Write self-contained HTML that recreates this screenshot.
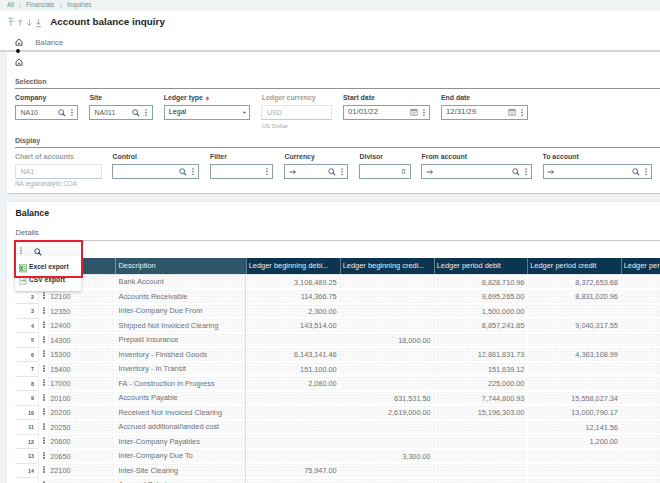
<!DOCTYPE html>
<html><head><meta charset="utf-8"><style>
html,body{margin:0;padding:0;width:660px;height:483px;overflow:hidden;background:#fff;position:relative;}
body{font-family:"Liberation Sans",sans-serif;}
.t{position:absolute;white-space:pre;}
.r{position:absolute;}
</style></head><body>
<div class="r" style="left:0.00px;top:0.00px;width:660.00px;height:10.80px;background:#eff3f4"></div>
<div class="t" style="left:7.00px;top:2.27px;font-size:6.3px;line-height:6.3px;color:#6a9690;font-weight:normal;">All</div>
<div class="t" style="left:26.00px;top:2.27px;font-size:6.3px;line-height:6.3px;color:#6a9690;font-weight:normal;">Financials</div>
<div class="t" style="left:67.00px;top:2.10px;font-size:6.5px;line-height:6.5px;color:#6a9690;font-weight:normal;">Inquiries</div>
<svg class="r" style="left:18.00px;top:1.80px;" width="4" height="7" viewBox="0 0 4 7"><path d="M1 0.9 L3.1 3.4 L1 5.9" fill="none" stroke="#b3bec1" stroke-width="0.75"/></svg>
<svg class="r" style="left:59.00px;top:1.80px;" width="4" height="7" viewBox="0 0 4 7"><path d="M1 0.9 L3.1 3.4 L1 5.9" fill="none" stroke="#b3bec1" stroke-width="0.75"/></svg>
<svg class="r" style="left:0.00px;top:12.00px;" width="50" height="20" viewBox="0 0 50 20"><g fill="none" stroke="#98aab2" stroke-width="0.95"><path d="M8.4 6.4 H13.2 M10.8 13.6 V8 M8.8 10 L10.8 8 L12.8 10"/><path d="M20.2 13.6 V7.8 M18.2 9.8 L20.2 7.8 L22.2 9.8"/><path d="M29.4 7.6 V13.4 M27.4 11.4 L29.4 13.4 L31.4 11.4"/><path d="M38.5 7.6 V12.6 M36.5 10.6 L38.5 12.6 L40.5 10.6 M36.1 14.6 H40.9"/></g></svg>
<div class="t" style="left:50.20px;top:17.02px;font-size:9.9px;line-height:9.9px;color:#1d1d1f;font-weight:bold;">Account balance inquiry</div>
<svg class="r" style="left:14.80px;top:38.40px;" width="8" height="8" viewBox="0 0 8 8"><path d="M1 7.2 V3.8 L4 1 L7 3.8 V7.2 Z" fill="none" stroke="#3a3a3a" stroke-width="0.9" stroke-linejoin="round"/><circle cx="4" cy="5.4" r="0.8" fill="#3a3a3a"/></svg>
<div class="t" style="left:35.20px;top:38.54px;font-size:7.75px;line-height:7.75px;color:#68747c;font-weight:normal;">Balance</div>
<div class="r" style="left:0.00px;top:52.00px;width:660.00px;height:431.00px;background:#eef2f4"></div>
<div class="r" style="left:0.00px;top:50.00px;width:660.00px;height:2.00px;background:#d3d7d9"></div>
<div class="r" style="left:6.70px;top:52.00px;width:693.30px;height:141.00px;background:#fff;box-shadow:0 0.8px 1px rgba(0,0,0,0.18)"></div>
<svg class="r" style="left:15.80px;top:48.80px;" width="4" height="4" viewBox="0 0 4 4"><circle cx="2" cy="2" r="1.9" fill="#000"/></svg>
<svg class="r" style="left:14.80px;top:58.20px;" width="8" height="8" viewBox="0 0 8 8"><path d="M1 7.2 V3.8 L4 1 L7 3.8 V7.2 Z" fill="none" stroke="#3a3a3a" stroke-width="0.9" stroke-linejoin="round"/><circle cx="4" cy="5.4" r="0.8" fill="#3a3a3a"/></svg>
<div class="t" style="left:15.00px;top:78.99px;font-size:7.1px;line-height:7.1px;color:#596469;font-weight:bold;">Selection</div>
<div class="r" style="left:15.00px;top:88.20px;width:645.00px;height:1.00px;background:#8c9297"></div>
<div class="t" style="left:15.00px;top:95.06px;font-size:6.9px;line-height:6.9px;color:#3b464d;font-weight:bold;">Company</div>
<div class="t" style="left:89.50px;top:95.06px;font-size:6.9px;line-height:6.9px;color:#3b464d;font-weight:bold;">Site</div>
<div class="t" style="left:163.80px;top:95.06px;font-size:6.9px;line-height:6.9px;color:#3b464d;font-weight:bold;">Ledger type</div>
<svg class="r" style="left:204.60px;top:95.50px;" width="5" height="5" viewBox="0 0 5 5"><path d="M2.5 0.6 V4.4 M0.85 1.55 L4.15 3.45 M0.85 3.45 L4.15 1.55" stroke="#e0456a" stroke-width="0.9"/></svg>
<div class="t" style="left:261.70px;top:95.06px;font-size:6.9px;line-height:6.9px;color:#959fa5;font-weight:bold;">Ledger currency</div>
<div class="t" style="left:343.00px;top:95.06px;font-size:6.9px;line-height:6.9px;color:#3b464d;font-weight:bold;">Start date</div>
<div class="t" style="left:441.00px;top:95.06px;font-size:6.9px;line-height:6.9px;color:#3b464d;font-weight:bold;">End date</div>
<div class="r" style="left:15.00px;top:105.00px;width:63.00px;height:15.00px;background:#fff;border:1px solid #8aa0ab;box-sizing:border-box;border-radius:0.6px"></div>
<div class="t" style="left:20.50px;top:108.97px;font-size:7px;line-height:7px;color:#4d5860;font-weight:normal;">NA10</div>
<svg class="r" style="left:58.30px;top:108.60px;" width="8" height="8" viewBox="0 0 8 8"><circle cx="3.2" cy="3.2" r="2.45" fill="none" stroke="#50677a" stroke-width="0.95"/><path d="M5 5 L6.8 6.8" stroke="#50677a" stroke-width="1.2" stroke-linecap="round"/></svg>
<svg class="r" style="left:71.40px;top:109.00px;" width="2" height="8" viewBox="0 0 2 8"><circle cx="1" cy="1" r="0.8" fill="#55697a"/><circle cx="1" cy="3.6" r="0.8" fill="#55697a"/><circle cx="1" cy="6.2" r="0.8" fill="#55697a"/></svg>
<div class="r" style="left:89.00px;top:105.00px;width:63.50px;height:15.00px;background:#fff;border:1px solid #8aa0ab;box-sizing:border-box;border-radius:0.6px"></div>
<div class="t" style="left:94.50px;top:108.97px;font-size:7px;line-height:7px;color:#4d5860;font-weight:normal;">NA011</div>
<svg class="r" style="left:132.30px;top:108.60px;" width="8" height="8" viewBox="0 0 8 8"><circle cx="3.2" cy="3.2" r="2.45" fill="none" stroke="#50677a" stroke-width="0.95"/><path d="M5 5 L6.8 6.8" stroke="#50677a" stroke-width="1.2" stroke-linecap="round"/></svg>
<svg class="r" style="left:145.40px;top:109.00px;" width="2" height="8" viewBox="0 0 2 8"><circle cx="1" cy="1" r="0.8" fill="#55697a"/><circle cx="1" cy="3.6" r="0.8" fill="#55697a"/><circle cx="1" cy="6.2" r="0.8" fill="#55697a"/></svg>
<div class="r" style="left:163.50px;top:105.00px;width:86.50px;height:15.00px;background:#fff;border:1px solid #8aa0ab;box-sizing:border-box;border-radius:0.6px"></div>
<div class="t" style="left:168.80px;top:109.19px;font-size:7.1px;line-height:7.1px;color:#1f2629;font-weight:normal;">Legal</div>
<svg class="r" style="left:241.50px;top:110.50px;" width="5" height="4" viewBox="0 0 5 4"><path d="M0.6 0.8 H4.4 L2.5 3 Z" fill="#6d7b82"/></svg>
<div class="r" style="left:261.20px;top:105.00px;width:70.80px;height:15.00px;background:#fff;border:1px solid #dfe6e9;border-bottom:1.3px solid #bfcbd1;box-sizing:border-box;border-radius:0.6px"></div>
<div class="t" style="left:267.00px;top:108.97px;font-size:7px;line-height:7px;color:#a3adb2;font-weight:normal;">USD</div>
<div class="t" style="left:261.70px;top:122.99px;font-size:6.15px;line-height:6.15px;color:#a3adb2;font-weight:normal;">US Dollar</div>
<div class="r" style="left:343.00px;top:105.00px;width:87.00px;height:15.00px;background:#fff;border:1px solid #8aa0ab;box-sizing:border-box;border-radius:0.6px"></div>
<div class="t" style="left:348.00px;top:108.38px;font-size:7.7px;line-height:7.7px;color:#4d5860;font-weight:normal;">01/01/22</div>
<svg class="r" style="left:410.00px;top:108.30px;" width="8" height="8" viewBox="0 0 8 8"><rect x="0.8" y="1.6" width="6.4" height="5.6" fill="none" stroke="#8e9ea6" stroke-width="0.9"/><rect x="0.8" y="1.6" width="6.4" height="1.6" fill="#8e9ea6"/><path d="M2.5 0.6 V2.2 M5.5 0.6 V2.2" stroke="#8e9ea6" stroke-width="0.8"/><path d="M2 4.6 H6 M2 6 H6 M4 3.4 V7" stroke="#8e9ea6" stroke-width="0.4"/></svg>
<svg class="r" style="left:423.20px;top:109.00px;" width="2" height="8" viewBox="0 0 2 8"><circle cx="1" cy="1" r="0.8" fill="#55697a"/><circle cx="1" cy="3.6" r="0.8" fill="#55697a"/><circle cx="1" cy="6.2" r="0.8" fill="#55697a"/></svg>
<div class="r" style="left:441.00px;top:105.00px;width:87.00px;height:15.00px;background:#fff;border:1px solid #8aa0ab;box-sizing:border-box;border-radius:0.6px"></div>
<div class="t" style="left:446.00px;top:108.38px;font-size:7.7px;line-height:7.7px;color:#4d5860;font-weight:normal;">12/31/29</div>
<svg class="r" style="left:508.00px;top:108.30px;" width="8" height="8" viewBox="0 0 8 8"><rect x="0.8" y="1.6" width="6.4" height="5.6" fill="none" stroke="#8e9ea6" stroke-width="0.9"/><rect x="0.8" y="1.6" width="6.4" height="1.6" fill="#8e9ea6"/><path d="M2.5 0.6 V2.2 M5.5 0.6 V2.2" stroke="#8e9ea6" stroke-width="0.8"/><path d="M2 4.6 H6 M2 6 H6 M4 3.4 V7" stroke="#8e9ea6" stroke-width="0.4"/></svg>
<svg class="r" style="left:521.20px;top:109.00px;" width="2" height="8" viewBox="0 0 2 8"><circle cx="1" cy="1" r="0.8" fill="#55697a"/><circle cx="1" cy="3.6" r="0.8" fill="#55697a"/><circle cx="1" cy="6.2" r="0.8" fill="#55697a"/></svg>
<div class="t" style="left:15.00px;top:138.09px;font-size:7.1px;line-height:7.1px;color:#596469;font-weight:bold;">Display</div>
<div class="r" style="left:15.00px;top:147.20px;width:645.00px;height:1.00px;background:#8c9297"></div>
<div class="t" style="left:15.00px;top:153.93px;font-size:6.94px;line-height:6.94px;color:#959fa5;font-weight:bold;">Chart of accounts</div>
<div class="t" style="left:112.50px;top:153.96px;font-size:6.9px;line-height:6.9px;color:#3b464d;font-weight:bold;">Control</div>
<div class="t" style="left:210.00px;top:153.96px;font-size:6.9px;line-height:6.9px;color:#3b464d;font-weight:bold;">Filter</div>
<div class="t" style="left:284.50px;top:153.96px;font-size:6.9px;line-height:6.9px;color:#3b464d;font-weight:bold;">Currency</div>
<div class="t" style="left:359.50px;top:153.96px;font-size:6.9px;line-height:6.9px;color:#3b464d;font-weight:bold;">Divisor</div>
<div class="t" style="left:421.50px;top:153.96px;font-size:6.9px;line-height:6.9px;color:#3b464d;font-weight:bold;">From account</div>
<div class="t" style="left:542.50px;top:153.96px;font-size:6.9px;line-height:6.9px;color:#3b464d;font-weight:bold;">To account</div>
<div class="r" style="left:15.00px;top:164.00px;width:86.50px;height:15.00px;background:#fff;border:1px solid #dfe6e9;border-bottom:1.3px solid #bfcbd1;box-sizing:border-box;border-radius:0.6px"></div>
<div class="t" style="left:20.50px;top:168.07px;font-size:7px;line-height:7px;color:#a3adb2;font-weight:normal;">NA1</div>
<div class="t" style="left:15.00px;top:181.37px;font-size:6.3px;line-height:6.3px;color:#a3adb2;font-weight:normal;">NA legal/analytic COA</div>
<div class="r" style="left:112.00px;top:164.00px;width:87.00px;height:15.00px;background:#fff;border:1px solid #8aa0ab;box-sizing:border-box;border-radius:0.6px"></div>
<svg class="r" style="left:179.30px;top:167.60px;" width="8" height="8" viewBox="0 0 8 8"><circle cx="3.2" cy="3.2" r="2.45" fill="none" stroke="#50677a" stroke-width="0.95"/><path d="M5 5 L6.8 6.8" stroke="#50677a" stroke-width="1.2" stroke-linecap="round"/></svg>
<svg class="r" style="left:192.40px;top:168.00px;" width="2" height="8" viewBox="0 0 2 8"><circle cx="1" cy="1" r="0.8" fill="#55697a"/><circle cx="1" cy="3.6" r="0.8" fill="#55697a"/><circle cx="1" cy="6.2" r="0.8" fill="#55697a"/></svg>
<div class="r" style="left:210.00px;top:164.00px;width:63.00px;height:15.00px;background:#fff;border:1px solid #8aa0ab;box-sizing:border-box;border-radius:0.6px"></div>
<svg class="r" style="left:266.40px;top:168.00px;" width="2" height="8" viewBox="0 0 2 8"><circle cx="1" cy="1" r="0.8" fill="#55697a"/><circle cx="1" cy="3.6" r="0.8" fill="#55697a"/><circle cx="1" cy="6.2" r="0.8" fill="#55697a"/></svg>
<div class="r" style="left:284.00px;top:164.00px;width:64.00px;height:15.00px;background:#fff;border:1px solid #8aa0ab;box-sizing:border-box;border-radius:0.6px"></div>
<svg class="r" style="left:288.50px;top:168.60px;" width="8" height="6" viewBox="0 0 8 6"><path d="M0.7 3 H6.4 M4.5 1.2 L6.4 3 L4.5 4.8" fill="none" stroke="#4a6172" stroke-width="1"/></svg>
<svg class="r" style="left:328.30px;top:167.60px;" width="8" height="8" viewBox="0 0 8 8"><circle cx="3.2" cy="3.2" r="2.45" fill="none" stroke="#50677a" stroke-width="0.95"/><path d="M5 5 L6.8 6.8" stroke="#50677a" stroke-width="1.2" stroke-linecap="round"/></svg>
<svg class="r" style="left:341.40px;top:168.00px;" width="2" height="8" viewBox="0 0 2 8"><circle cx="1" cy="1" r="0.8" fill="#55697a"/><circle cx="1" cy="3.6" r="0.8" fill="#55697a"/><circle cx="1" cy="6.2" r="0.8" fill="#55697a"/></svg>
<div class="r" style="left:359.00px;top:164.00px;width:51.50px;height:15.00px;background:#fff;border:1px solid #8aa0ab;box-sizing:border-box;border-radius:0.6px"></div>
<div class="t" style="right:254.50px;top:168.07px;font-size:7px;line-height:7px;color:#4d5860;font-weight:normal;text-align:right;">0</div>
<div class="r" style="left:421.00px;top:164.00px;width:111.00px;height:15.00px;background:#fff;border:1px solid #8aa0ab;box-sizing:border-box;border-radius:0.6px"></div>
<svg class="r" style="left:425.50px;top:168.60px;" width="8" height="6" viewBox="0 0 8 6"><path d="M0.7 3 H6.4 M4.5 1.2 L6.4 3 L4.5 4.8" fill="none" stroke="#4a6172" stroke-width="1"/></svg>
<svg class="r" style="left:512.30px;top:167.60px;" width="8" height="8" viewBox="0 0 8 8"><circle cx="3.2" cy="3.2" r="2.45" fill="none" stroke="#50677a" stroke-width="0.95"/><path d="M5 5 L6.8 6.8" stroke="#50677a" stroke-width="1.2" stroke-linecap="round"/></svg>
<svg class="r" style="left:525.40px;top:168.00px;" width="2" height="8" viewBox="0 0 2 8"><circle cx="1" cy="1" r="0.8" fill="#55697a"/><circle cx="1" cy="3.6" r="0.8" fill="#55697a"/><circle cx="1" cy="6.2" r="0.8" fill="#55697a"/></svg>
<div class="r" style="left:542.50px;top:164.00px;width:109.50px;height:15.00px;background:#fff;border:1px solid #8aa0ab;box-sizing:border-box;border-radius:0.6px"></div>
<svg class="r" style="left:547.00px;top:168.60px;" width="8" height="6" viewBox="0 0 8 6"><path d="M0.7 3 H6.4 M4.5 1.2 L6.4 3 L4.5 4.8" fill="none" stroke="#4a6172" stroke-width="1"/></svg>
<svg class="r" style="left:632.30px;top:167.60px;" width="8" height="8" viewBox="0 0 8 8"><circle cx="3.2" cy="3.2" r="2.45" fill="none" stroke="#50677a" stroke-width="0.95"/><path d="M5 5 L6.8 6.8" stroke="#50677a" stroke-width="1.2" stroke-linecap="round"/></svg>
<svg class="r" style="left:645.40px;top:168.00px;" width="2" height="8" viewBox="0 0 2 8"><circle cx="1" cy="1" r="0.8" fill="#55697a"/><circle cx="1" cy="3.6" r="0.8" fill="#55697a"/><circle cx="1" cy="6.2" r="0.8" fill="#55697a"/></svg>
<div class="r" style="left:6.70px;top:201.70px;width:693.30px;height:281.30px;background:#fff;box-shadow:0 0 1px rgba(0,0,0,0.15)"></div>
<div class="t" style="left:15.50px;top:208.68px;font-size:8.76px;line-height:8.76px;color:#1b1b1b;font-weight:bold;">Balance</div>
<div class="t" style="left:15.50px;top:229.02px;font-size:7.66px;line-height:7.66px;color:#58636a;font-weight:normal;">Details</div>
<div class="r" style="left:15.00px;top:240.00px;width:645.00px;height:1.00px;background:#c4c8cb"></div>
<div class="r" style="left:47.50px;top:257.60px;width:198.50px;height:16.00px;background:#2d566b"></div>
<div class="r" style="left:246.00px;top:257.60px;width:454.00px;height:16.00px;background:#0b3550"></div>
<div class="r" style="left:15.00px;top:257.60px;width:32.50px;height:16.00px;background:#2d566b"></div>
<div class="r" style="left:115.10px;top:257.60px;width:1.00px;height:16.00px;background:#7593a0"></div>
<div class="r" style="left:245.50px;top:257.60px;width:1.00px;height:16.00px;background:#5d7d8e"></div>
<div class="r" style="left:339.50px;top:257.60px;width:1.00px;height:16.00px;background:#5d7d8e"></div>
<div class="r" style="left:433.50px;top:257.60px;width:1.00px;height:16.00px;background:#5d7d8e"></div>
<div class="r" style="left:527.00px;top:257.60px;width:1.00px;height:16.00px;background:#5d7d8e"></div>
<div class="r" style="left:620.50px;top:257.60px;width:1.00px;height:16.00px;background:#5d7d8e"></div>
<div class="t" style="left:118.50px;top:262.09px;font-size:7.45px;line-height:7.45px;color:#e9eef1;font-weight:normal;">Description</div>
<div class="t" style="left:248.70px;top:262.09px;font-size:7.45px;line-height:7.45px;color:#e9eef1;font-weight:normal;">Ledger beginning debi...</div>
<div class="t" style="left:342.70px;top:262.09px;font-size:7.45px;line-height:7.45px;color:#e9eef1;font-weight:normal;">Ledger beginning credi...</div>
<div class="t" style="left:436.70px;top:262.09px;font-size:7.45px;line-height:7.45px;color:#e9eef1;font-weight:normal;">Ledger period debit</div>
<div class="t" style="left:530.20px;top:262.09px;font-size:7.45px;line-height:7.45px;color:#e9eef1;font-weight:normal;">Ledger period credit</div>
<div class="t" style="left:623.70px;top:262.09px;font-size:7.45px;line-height:7.45px;color:#e9eef1;font-weight:normal;">Ledger period...</div>
<div class="r" style="left:15.00px;top:273.50px;width:685.00px;height:1.40px;background:#dfe3e4"></div>
<div class="r" style="left:15.00px;top:288.50px;width:23.20px;height:1.00px;background:#e3e7e9"></div>
<div class="r" style="left:47.80px;top:275.80px;width:67.30px;height:12.20px;background-color:#fefefe;background-image:linear-gradient(90deg,#f4f4f4 0.75px,transparent 0.75px),linear-gradient(#f5f5f5 0.75px,transparent 0.75px);background-size:2.91px 2.91px;"></div>
<div class="r" style="left:116.10px;top:275.80px;width:129.50px;height:12.20px;background-color:#fefefe;background-image:linear-gradient(90deg,#f4f4f4 0.75px,transparent 0.75px),linear-gradient(#f5f5f5 0.75px,transparent 0.75px);background-size:2.91px 2.91px;"></div>
<div class="r" style="left:246.50px;top:275.80px;width:93.10px;height:12.20px;background-color:#fefefe;background-image:linear-gradient(90deg,#f4f4f4 0.75px,transparent 0.75px),linear-gradient(#f5f5f5 0.75px,transparent 0.75px);background-size:2.91px 2.91px;"></div>
<div class="r" style="left:340.40px;top:275.80px;width:93.20px;height:12.20px;background-color:#fefefe;background-image:linear-gradient(90deg,#f4f4f4 0.75px,transparent 0.75px),linear-gradient(#f5f5f5 0.75px,transparent 0.75px);background-size:2.91px 2.91px;"></div>
<div class="r" style="left:434.40px;top:275.80px;width:92.70px;height:12.20px;background-color:#fefefe;background-image:linear-gradient(90deg,#f4f4f4 0.75px,transparent 0.75px),linear-gradient(#f5f5f5 0.75px,transparent 0.75px);background-size:2.91px 2.91px;"></div>
<div class="r" style="left:527.90px;top:275.80px;width:92.70px;height:12.20px;background-color:#fefefe;background-image:linear-gradient(90deg,#f4f4f4 0.75px,transparent 0.75px),linear-gradient(#f5f5f5 0.75px,transparent 0.75px);background-size:2.91px 2.91px;"></div>
<div class="r" style="left:621.40px;top:275.80px;width:78.60px;height:12.20px;background-color:#fefefe;background-image:linear-gradient(90deg,#f4f4f4 0.75px,transparent 0.75px),linear-gradient(#f5f5f5 0.75px,transparent 0.75px);background-size:2.91px 2.91px;"></div>
<div class="t" style="right:626.20px;top:280.30px;font-size:5.2px;line-height:5.2px;color:#4a5660;font-weight:bold;text-align:right;">1</div>
<svg class="r" style="left:43.20px;top:277.90px;" width="2" height="8" viewBox="0 0 2 8"><circle cx="1" cy="1" r="0.85" fill="#36414a"/><circle cx="1" cy="3.45" r="0.85" fill="#36414a"/><circle cx="1" cy="5.9" r="0.85" fill="#36414a"/></svg>
<div class="t" style="left:50.30px;top:278.56px;font-size:7.25px;line-height:7.25px;color:#69737a;font-weight:normal;">10100</div>
<div class="t" style="left:118.50px;top:278.44px;font-size:7.4px;line-height:7.4px;color:#69737a;font-weight:normal;">Bank Account</div>
<div class="t" style="right:323.40px;top:278.52px;font-size:7.3px;line-height:7.3px;color:#69737a;font-weight:normal;text-align:right;">3,106,489.25</div>
<div class="t" style="right:135.60px;top:278.52px;font-size:7.3px;line-height:7.3px;color:#69737a;font-weight:normal;text-align:right;">8,828,710.96</div>
<div class="t" style="right:42.10px;top:278.52px;font-size:7.3px;line-height:7.3px;color:#69737a;font-weight:normal;text-align:right;">8,372,653.68</div>
<div class="r" style="left:15.00px;top:303.00px;width:23.20px;height:1.00px;background:#e3e7e9"></div>
<div class="r" style="left:47.80px;top:290.00px;width:67.30px;height:12.50px;background-color:#fefefe;background-image:linear-gradient(90deg,#f4f4f4 0.75px,transparent 0.75px),linear-gradient(#f5f5f5 0.75px,transparent 0.75px);background-size:2.91px 2.91px;"></div>
<div class="r" style="left:116.10px;top:290.00px;width:129.50px;height:12.50px;background-color:#fefefe;background-image:linear-gradient(90deg,#f4f4f4 0.75px,transparent 0.75px),linear-gradient(#f5f5f5 0.75px,transparent 0.75px);background-size:2.91px 2.91px;"></div>
<div class="r" style="left:246.50px;top:290.00px;width:93.10px;height:12.50px;background-color:#fefefe;background-image:linear-gradient(90deg,#f4f4f4 0.75px,transparent 0.75px),linear-gradient(#f5f5f5 0.75px,transparent 0.75px);background-size:2.91px 2.91px;"></div>
<div class="r" style="left:340.40px;top:290.00px;width:93.20px;height:12.50px;background-color:#fefefe;background-image:linear-gradient(90deg,#f4f4f4 0.75px,transparent 0.75px),linear-gradient(#f5f5f5 0.75px,transparent 0.75px);background-size:2.91px 2.91px;"></div>
<div class="r" style="left:434.40px;top:290.00px;width:92.70px;height:12.50px;background-color:#fefefe;background-image:linear-gradient(90deg,#f4f4f4 0.75px,transparent 0.75px),linear-gradient(#f5f5f5 0.75px,transparent 0.75px);background-size:2.91px 2.91px;"></div>
<div class="r" style="left:527.90px;top:290.00px;width:92.70px;height:12.50px;background-color:#fefefe;background-image:linear-gradient(90deg,#f4f4f4 0.75px,transparent 0.75px),linear-gradient(#f5f5f5 0.75px,transparent 0.75px);background-size:2.91px 2.91px;"></div>
<div class="r" style="left:621.40px;top:290.00px;width:78.60px;height:12.50px;background-color:#fefefe;background-image:linear-gradient(90deg,#f4f4f4 0.75px,transparent 0.75px),linear-gradient(#f5f5f5 0.75px,transparent 0.75px);background-size:2.91px 2.91px;"></div>
<div class="t" style="right:626.20px;top:294.80px;font-size:5.2px;line-height:5.2px;color:#4a5660;font-weight:bold;text-align:right;">2</div>
<svg class="r" style="left:43.20px;top:292.40px;" width="2" height="8" viewBox="0 0 2 8"><circle cx="1" cy="1" r="0.85" fill="#36414a"/><circle cx="1" cy="3.45" r="0.85" fill="#36414a"/><circle cx="1" cy="5.9" r="0.85" fill="#36414a"/></svg>
<div class="t" style="left:50.30px;top:293.06px;font-size:7.25px;line-height:7.25px;color:#69737a;font-weight:normal;">12100</div>
<div class="t" style="left:118.50px;top:292.94px;font-size:7.4px;line-height:7.4px;color:#69737a;font-weight:normal;">Accounts Receivable</div>
<div class="t" style="right:323.40px;top:293.02px;font-size:7.3px;line-height:7.3px;color:#69737a;font-weight:normal;text-align:right;">114,366.75</div>
<div class="t" style="right:135.60px;top:293.02px;font-size:7.3px;line-height:7.3px;color:#69737a;font-weight:normal;text-align:right;">9,695,265.00</div>
<div class="t" style="right:42.10px;top:293.02px;font-size:7.3px;line-height:7.3px;color:#69737a;font-weight:normal;text-align:right;">8,831,020.96</div>
<div class="r" style="left:15.00px;top:317.50px;width:23.20px;height:1.00px;background:#e3e7e9"></div>
<div class="r" style="left:47.80px;top:304.50px;width:67.30px;height:12.50px;background-color:#fefefe;background-image:linear-gradient(90deg,#f4f4f4 0.75px,transparent 0.75px),linear-gradient(#f5f5f5 0.75px,transparent 0.75px);background-size:2.91px 2.91px;"></div>
<div class="r" style="left:116.10px;top:304.50px;width:129.50px;height:12.50px;background-color:#fefefe;background-image:linear-gradient(90deg,#f4f4f4 0.75px,transparent 0.75px),linear-gradient(#f5f5f5 0.75px,transparent 0.75px);background-size:2.91px 2.91px;"></div>
<div class="r" style="left:246.50px;top:304.50px;width:93.10px;height:12.50px;background-color:#fefefe;background-image:linear-gradient(90deg,#f4f4f4 0.75px,transparent 0.75px),linear-gradient(#f5f5f5 0.75px,transparent 0.75px);background-size:2.91px 2.91px;"></div>
<div class="r" style="left:340.40px;top:304.50px;width:93.20px;height:12.50px;background-color:#fefefe;background-image:linear-gradient(90deg,#f4f4f4 0.75px,transparent 0.75px),linear-gradient(#f5f5f5 0.75px,transparent 0.75px);background-size:2.91px 2.91px;"></div>
<div class="r" style="left:434.40px;top:304.50px;width:92.70px;height:12.50px;background-color:#fefefe;background-image:linear-gradient(90deg,#f4f4f4 0.75px,transparent 0.75px),linear-gradient(#f5f5f5 0.75px,transparent 0.75px);background-size:2.91px 2.91px;"></div>
<div class="r" style="left:527.90px;top:304.50px;width:92.70px;height:12.50px;background-color:#fefefe;background-image:linear-gradient(90deg,#f4f4f4 0.75px,transparent 0.75px),linear-gradient(#f5f5f5 0.75px,transparent 0.75px);background-size:2.91px 2.91px;"></div>
<div class="r" style="left:621.40px;top:304.50px;width:78.60px;height:12.50px;background-color:#fefefe;background-image:linear-gradient(90deg,#f4f4f4 0.75px,transparent 0.75px),linear-gradient(#f5f5f5 0.75px,transparent 0.75px);background-size:2.91px 2.91px;"></div>
<div class="t" style="right:626.20px;top:309.30px;font-size:5.2px;line-height:5.2px;color:#4a5660;font-weight:bold;text-align:right;">3</div>
<svg class="r" style="left:43.20px;top:306.90px;" width="2" height="8" viewBox="0 0 2 8"><circle cx="1" cy="1" r="0.85" fill="#36414a"/><circle cx="1" cy="3.45" r="0.85" fill="#36414a"/><circle cx="1" cy="5.9" r="0.85" fill="#36414a"/></svg>
<div class="t" style="left:50.30px;top:307.56px;font-size:7.25px;line-height:7.25px;color:#69737a;font-weight:normal;">12350</div>
<div class="t" style="left:118.50px;top:307.44px;font-size:7.4px;line-height:7.4px;color:#69737a;font-weight:normal;">Inter-Company Due From</div>
<div class="t" style="right:323.40px;top:307.52px;font-size:7.3px;line-height:7.3px;color:#69737a;font-weight:normal;text-align:right;">2,300.00</div>
<div class="t" style="right:135.60px;top:307.52px;font-size:7.3px;line-height:7.3px;color:#69737a;font-weight:normal;text-align:right;">1,500,000.00</div>
<div class="r" style="left:15.00px;top:332.00px;width:23.20px;height:1.00px;background:#e3e7e9"></div>
<div class="r" style="left:47.80px;top:319.00px;width:67.30px;height:12.50px;background-color:#fefefe;background-image:linear-gradient(90deg,#f4f4f4 0.75px,transparent 0.75px),linear-gradient(#f5f5f5 0.75px,transparent 0.75px);background-size:2.91px 2.91px;"></div>
<div class="r" style="left:116.10px;top:319.00px;width:129.50px;height:12.50px;background-color:#fefefe;background-image:linear-gradient(90deg,#f4f4f4 0.75px,transparent 0.75px),linear-gradient(#f5f5f5 0.75px,transparent 0.75px);background-size:2.91px 2.91px;"></div>
<div class="r" style="left:246.50px;top:319.00px;width:93.10px;height:12.50px;background-color:#fefefe;background-image:linear-gradient(90deg,#f4f4f4 0.75px,transparent 0.75px),linear-gradient(#f5f5f5 0.75px,transparent 0.75px);background-size:2.91px 2.91px;"></div>
<div class="r" style="left:340.40px;top:319.00px;width:93.20px;height:12.50px;background-color:#fefefe;background-image:linear-gradient(90deg,#f4f4f4 0.75px,transparent 0.75px),linear-gradient(#f5f5f5 0.75px,transparent 0.75px);background-size:2.91px 2.91px;"></div>
<div class="r" style="left:434.40px;top:319.00px;width:92.70px;height:12.50px;background-color:#fefefe;background-image:linear-gradient(90deg,#f4f4f4 0.75px,transparent 0.75px),linear-gradient(#f5f5f5 0.75px,transparent 0.75px);background-size:2.91px 2.91px;"></div>
<div class="r" style="left:527.90px;top:319.00px;width:92.70px;height:12.50px;background-color:#fefefe;background-image:linear-gradient(90deg,#f4f4f4 0.75px,transparent 0.75px),linear-gradient(#f5f5f5 0.75px,transparent 0.75px);background-size:2.91px 2.91px;"></div>
<div class="r" style="left:621.40px;top:319.00px;width:78.60px;height:12.50px;background-color:#fefefe;background-image:linear-gradient(90deg,#f4f4f4 0.75px,transparent 0.75px),linear-gradient(#f5f5f5 0.75px,transparent 0.75px);background-size:2.91px 2.91px;"></div>
<div class="t" style="right:626.20px;top:323.80px;font-size:5.2px;line-height:5.2px;color:#4a5660;font-weight:bold;text-align:right;">4</div>
<svg class="r" style="left:43.20px;top:321.40px;" width="2" height="8" viewBox="0 0 2 8"><circle cx="1" cy="1" r="0.85" fill="#36414a"/><circle cx="1" cy="3.45" r="0.85" fill="#36414a"/><circle cx="1" cy="5.9" r="0.85" fill="#36414a"/></svg>
<div class="t" style="left:50.30px;top:322.06px;font-size:7.25px;line-height:7.25px;color:#69737a;font-weight:normal;">12400</div>
<div class="t" style="left:118.50px;top:321.94px;font-size:7.4px;line-height:7.4px;color:#69737a;font-weight:normal;">Shipped Not Invoiced Clearing</div>
<div class="t" style="right:323.40px;top:322.02px;font-size:7.3px;line-height:7.3px;color:#69737a;font-weight:normal;text-align:right;">143,514.00</div>
<div class="t" style="right:135.60px;top:322.02px;font-size:7.3px;line-height:7.3px;color:#69737a;font-weight:normal;text-align:right;">8,857,241.65</div>
<div class="t" style="right:42.10px;top:322.02px;font-size:7.3px;line-height:7.3px;color:#69737a;font-weight:normal;text-align:right;">9,040,317.55</div>
<div class="r" style="left:15.00px;top:346.50px;width:23.20px;height:1.00px;background:#e3e7e9"></div>
<div class="r" style="left:47.80px;top:333.50px;width:67.30px;height:12.50px;background-color:#fefefe;background-image:linear-gradient(90deg,#f4f4f4 0.75px,transparent 0.75px),linear-gradient(#f5f5f5 0.75px,transparent 0.75px);background-size:2.91px 2.91px;"></div>
<div class="r" style="left:116.10px;top:333.50px;width:129.50px;height:12.50px;background-color:#fefefe;background-image:linear-gradient(90deg,#f4f4f4 0.75px,transparent 0.75px),linear-gradient(#f5f5f5 0.75px,transparent 0.75px);background-size:2.91px 2.91px;"></div>
<div class="r" style="left:246.50px;top:333.50px;width:93.10px;height:12.50px;background-color:#fefefe;background-image:linear-gradient(90deg,#f4f4f4 0.75px,transparent 0.75px),linear-gradient(#f5f5f5 0.75px,transparent 0.75px);background-size:2.91px 2.91px;"></div>
<div class="r" style="left:340.40px;top:333.50px;width:93.20px;height:12.50px;background-color:#fefefe;background-image:linear-gradient(90deg,#f4f4f4 0.75px,transparent 0.75px),linear-gradient(#f5f5f5 0.75px,transparent 0.75px);background-size:2.91px 2.91px;"></div>
<div class="r" style="left:434.40px;top:333.50px;width:92.70px;height:12.50px;background-color:#fefefe;background-image:linear-gradient(90deg,#f4f4f4 0.75px,transparent 0.75px),linear-gradient(#f5f5f5 0.75px,transparent 0.75px);background-size:2.91px 2.91px;"></div>
<div class="r" style="left:527.90px;top:333.50px;width:92.70px;height:12.50px;background-color:#fefefe;background-image:linear-gradient(90deg,#f4f4f4 0.75px,transparent 0.75px),linear-gradient(#f5f5f5 0.75px,transparent 0.75px);background-size:2.91px 2.91px;"></div>
<div class="r" style="left:621.40px;top:333.50px;width:78.60px;height:12.50px;background-color:#fefefe;background-image:linear-gradient(90deg,#f4f4f4 0.75px,transparent 0.75px),linear-gradient(#f5f5f5 0.75px,transparent 0.75px);background-size:2.91px 2.91px;"></div>
<div class="t" style="right:626.20px;top:338.30px;font-size:5.2px;line-height:5.2px;color:#4a5660;font-weight:bold;text-align:right;">5</div>
<svg class="r" style="left:43.20px;top:335.90px;" width="2" height="8" viewBox="0 0 2 8"><circle cx="1" cy="1" r="0.85" fill="#36414a"/><circle cx="1" cy="3.45" r="0.85" fill="#36414a"/><circle cx="1" cy="5.9" r="0.85" fill="#36414a"/></svg>
<div class="t" style="left:50.30px;top:336.56px;font-size:7.25px;line-height:7.25px;color:#69737a;font-weight:normal;">14300</div>
<div class="t" style="left:118.50px;top:336.44px;font-size:7.4px;line-height:7.4px;color:#69737a;font-weight:normal;">Prepaid Insurance</div>
<div class="t" style="right:229.40px;top:336.52px;font-size:7.3px;line-height:7.3px;color:#69737a;font-weight:normal;text-align:right;">18,000.00</div>
<div class="r" style="left:15.00px;top:361.00px;width:23.20px;height:1.00px;background:#e3e7e9"></div>
<div class="r" style="left:47.80px;top:348.00px;width:67.30px;height:12.50px;background-color:#fefefe;background-image:linear-gradient(90deg,#f4f4f4 0.75px,transparent 0.75px),linear-gradient(#f5f5f5 0.75px,transparent 0.75px);background-size:2.91px 2.91px;"></div>
<div class="r" style="left:116.10px;top:348.00px;width:129.50px;height:12.50px;background-color:#fefefe;background-image:linear-gradient(90deg,#f4f4f4 0.75px,transparent 0.75px),linear-gradient(#f5f5f5 0.75px,transparent 0.75px);background-size:2.91px 2.91px;"></div>
<div class="r" style="left:246.50px;top:348.00px;width:93.10px;height:12.50px;background-color:#fefefe;background-image:linear-gradient(90deg,#f4f4f4 0.75px,transparent 0.75px),linear-gradient(#f5f5f5 0.75px,transparent 0.75px);background-size:2.91px 2.91px;"></div>
<div class="r" style="left:340.40px;top:348.00px;width:93.20px;height:12.50px;background-color:#fefefe;background-image:linear-gradient(90deg,#f4f4f4 0.75px,transparent 0.75px),linear-gradient(#f5f5f5 0.75px,transparent 0.75px);background-size:2.91px 2.91px;"></div>
<div class="r" style="left:434.40px;top:348.00px;width:92.70px;height:12.50px;background-color:#fefefe;background-image:linear-gradient(90deg,#f4f4f4 0.75px,transparent 0.75px),linear-gradient(#f5f5f5 0.75px,transparent 0.75px);background-size:2.91px 2.91px;"></div>
<div class="r" style="left:527.90px;top:348.00px;width:92.70px;height:12.50px;background-color:#fefefe;background-image:linear-gradient(90deg,#f4f4f4 0.75px,transparent 0.75px),linear-gradient(#f5f5f5 0.75px,transparent 0.75px);background-size:2.91px 2.91px;"></div>
<div class="r" style="left:621.40px;top:348.00px;width:78.60px;height:12.50px;background-color:#fefefe;background-image:linear-gradient(90deg,#f4f4f4 0.75px,transparent 0.75px),linear-gradient(#f5f5f5 0.75px,transparent 0.75px);background-size:2.91px 2.91px;"></div>
<div class="t" style="right:626.20px;top:352.80px;font-size:5.2px;line-height:5.2px;color:#4a5660;font-weight:bold;text-align:right;">6</div>
<svg class="r" style="left:43.20px;top:350.40px;" width="2" height="8" viewBox="0 0 2 8"><circle cx="1" cy="1" r="0.85" fill="#36414a"/><circle cx="1" cy="3.45" r="0.85" fill="#36414a"/><circle cx="1" cy="5.9" r="0.85" fill="#36414a"/></svg>
<div class="t" style="left:50.30px;top:351.06px;font-size:7.25px;line-height:7.25px;color:#69737a;font-weight:normal;">15300</div>
<div class="t" style="left:118.50px;top:350.94px;font-size:7.4px;line-height:7.4px;color:#69737a;font-weight:normal;">Inventory - Finished Goods</div>
<div class="t" style="right:323.40px;top:351.02px;font-size:7.3px;line-height:7.3px;color:#69737a;font-weight:normal;text-align:right;">6,143,141.46</div>
<div class="t" style="right:135.60px;top:351.02px;font-size:7.3px;line-height:7.3px;color:#69737a;font-weight:normal;text-align:right;">12,861,831.73</div>
<div class="t" style="right:42.10px;top:351.02px;font-size:7.3px;line-height:7.3px;color:#69737a;font-weight:normal;text-align:right;">4,363,108.99</div>
<div class="r" style="left:15.00px;top:375.50px;width:23.20px;height:1.00px;background:#e3e7e9"></div>
<div class="r" style="left:47.80px;top:362.50px;width:67.30px;height:12.50px;background-color:#fefefe;background-image:linear-gradient(90deg,#f4f4f4 0.75px,transparent 0.75px),linear-gradient(#f5f5f5 0.75px,transparent 0.75px);background-size:2.91px 2.91px;"></div>
<div class="r" style="left:116.10px;top:362.50px;width:129.50px;height:12.50px;background-color:#fefefe;background-image:linear-gradient(90deg,#f4f4f4 0.75px,transparent 0.75px),linear-gradient(#f5f5f5 0.75px,transparent 0.75px);background-size:2.91px 2.91px;"></div>
<div class="r" style="left:246.50px;top:362.50px;width:93.10px;height:12.50px;background-color:#fefefe;background-image:linear-gradient(90deg,#f4f4f4 0.75px,transparent 0.75px),linear-gradient(#f5f5f5 0.75px,transparent 0.75px);background-size:2.91px 2.91px;"></div>
<div class="r" style="left:340.40px;top:362.50px;width:93.20px;height:12.50px;background-color:#fefefe;background-image:linear-gradient(90deg,#f4f4f4 0.75px,transparent 0.75px),linear-gradient(#f5f5f5 0.75px,transparent 0.75px);background-size:2.91px 2.91px;"></div>
<div class="r" style="left:434.40px;top:362.50px;width:92.70px;height:12.50px;background-color:#fefefe;background-image:linear-gradient(90deg,#f4f4f4 0.75px,transparent 0.75px),linear-gradient(#f5f5f5 0.75px,transparent 0.75px);background-size:2.91px 2.91px;"></div>
<div class="r" style="left:527.90px;top:362.50px;width:92.70px;height:12.50px;background-color:#fefefe;background-image:linear-gradient(90deg,#f4f4f4 0.75px,transparent 0.75px),linear-gradient(#f5f5f5 0.75px,transparent 0.75px);background-size:2.91px 2.91px;"></div>
<div class="r" style="left:621.40px;top:362.50px;width:78.60px;height:12.50px;background-color:#fefefe;background-image:linear-gradient(90deg,#f4f4f4 0.75px,transparent 0.75px),linear-gradient(#f5f5f5 0.75px,transparent 0.75px);background-size:2.91px 2.91px;"></div>
<div class="t" style="right:626.20px;top:367.30px;font-size:5.2px;line-height:5.2px;color:#4a5660;font-weight:bold;text-align:right;">7</div>
<svg class="r" style="left:43.20px;top:364.90px;" width="2" height="8" viewBox="0 0 2 8"><circle cx="1" cy="1" r="0.85" fill="#36414a"/><circle cx="1" cy="3.45" r="0.85" fill="#36414a"/><circle cx="1" cy="5.9" r="0.85" fill="#36414a"/></svg>
<div class="t" style="left:50.30px;top:365.56px;font-size:7.25px;line-height:7.25px;color:#69737a;font-weight:normal;">15400</div>
<div class="t" style="left:118.50px;top:365.44px;font-size:7.4px;line-height:7.4px;color:#69737a;font-weight:normal;">Inventory - In Transit</div>
<div class="t" style="right:323.40px;top:365.52px;font-size:7.3px;line-height:7.3px;color:#69737a;font-weight:normal;text-align:right;">151,100.00</div>
<div class="t" style="right:135.60px;top:365.52px;font-size:7.3px;line-height:7.3px;color:#69737a;font-weight:normal;text-align:right;">151,639.12</div>
<div class="r" style="left:15.00px;top:390.00px;width:23.20px;height:1.00px;background:#e3e7e9"></div>
<div class="r" style="left:47.80px;top:377.00px;width:67.30px;height:12.50px;background-color:#fefefe;background-image:linear-gradient(90deg,#f4f4f4 0.75px,transparent 0.75px),linear-gradient(#f5f5f5 0.75px,transparent 0.75px);background-size:2.91px 2.91px;"></div>
<div class="r" style="left:116.10px;top:377.00px;width:129.50px;height:12.50px;background-color:#fefefe;background-image:linear-gradient(90deg,#f4f4f4 0.75px,transparent 0.75px),linear-gradient(#f5f5f5 0.75px,transparent 0.75px);background-size:2.91px 2.91px;"></div>
<div class="r" style="left:246.50px;top:377.00px;width:93.10px;height:12.50px;background-color:#fefefe;background-image:linear-gradient(90deg,#f4f4f4 0.75px,transparent 0.75px),linear-gradient(#f5f5f5 0.75px,transparent 0.75px);background-size:2.91px 2.91px;"></div>
<div class="r" style="left:340.40px;top:377.00px;width:93.20px;height:12.50px;background-color:#fefefe;background-image:linear-gradient(90deg,#f4f4f4 0.75px,transparent 0.75px),linear-gradient(#f5f5f5 0.75px,transparent 0.75px);background-size:2.91px 2.91px;"></div>
<div class="r" style="left:434.40px;top:377.00px;width:92.70px;height:12.50px;background-color:#fefefe;background-image:linear-gradient(90deg,#f4f4f4 0.75px,transparent 0.75px),linear-gradient(#f5f5f5 0.75px,transparent 0.75px);background-size:2.91px 2.91px;"></div>
<div class="r" style="left:527.90px;top:377.00px;width:92.70px;height:12.50px;background-color:#fefefe;background-image:linear-gradient(90deg,#f4f4f4 0.75px,transparent 0.75px),linear-gradient(#f5f5f5 0.75px,transparent 0.75px);background-size:2.91px 2.91px;"></div>
<div class="r" style="left:621.40px;top:377.00px;width:78.60px;height:12.50px;background-color:#fefefe;background-image:linear-gradient(90deg,#f4f4f4 0.75px,transparent 0.75px),linear-gradient(#f5f5f5 0.75px,transparent 0.75px);background-size:2.91px 2.91px;"></div>
<div class="t" style="right:626.20px;top:381.80px;font-size:5.2px;line-height:5.2px;color:#4a5660;font-weight:bold;text-align:right;">8</div>
<svg class="r" style="left:43.20px;top:379.40px;" width="2" height="8" viewBox="0 0 2 8"><circle cx="1" cy="1" r="0.85" fill="#36414a"/><circle cx="1" cy="3.45" r="0.85" fill="#36414a"/><circle cx="1" cy="5.9" r="0.85" fill="#36414a"/></svg>
<div class="t" style="left:50.30px;top:380.06px;font-size:7.25px;line-height:7.25px;color:#69737a;font-weight:normal;">17000</div>
<div class="t" style="left:118.50px;top:379.94px;font-size:7.4px;line-height:7.4px;color:#69737a;font-weight:normal;">FA - Construction in Progress</div>
<div class="t" style="right:323.40px;top:380.02px;font-size:7.3px;line-height:7.3px;color:#69737a;font-weight:normal;text-align:right;">2,080.00</div>
<div class="t" style="right:135.60px;top:380.02px;font-size:7.3px;line-height:7.3px;color:#69737a;font-weight:normal;text-align:right;">225,000.00</div>
<div class="r" style="left:15.00px;top:404.50px;width:23.20px;height:1.00px;background:#e3e7e9"></div>
<div class="r" style="left:47.80px;top:391.50px;width:67.30px;height:12.50px;background-color:#fefefe;background-image:linear-gradient(90deg,#f4f4f4 0.75px,transparent 0.75px),linear-gradient(#f5f5f5 0.75px,transparent 0.75px);background-size:2.91px 2.91px;"></div>
<div class="r" style="left:116.10px;top:391.50px;width:129.50px;height:12.50px;background-color:#fefefe;background-image:linear-gradient(90deg,#f4f4f4 0.75px,transparent 0.75px),linear-gradient(#f5f5f5 0.75px,transparent 0.75px);background-size:2.91px 2.91px;"></div>
<div class="r" style="left:246.50px;top:391.50px;width:93.10px;height:12.50px;background-color:#fefefe;background-image:linear-gradient(90deg,#f4f4f4 0.75px,transparent 0.75px),linear-gradient(#f5f5f5 0.75px,transparent 0.75px);background-size:2.91px 2.91px;"></div>
<div class="r" style="left:340.40px;top:391.50px;width:93.20px;height:12.50px;background-color:#fefefe;background-image:linear-gradient(90deg,#f4f4f4 0.75px,transparent 0.75px),linear-gradient(#f5f5f5 0.75px,transparent 0.75px);background-size:2.91px 2.91px;"></div>
<div class="r" style="left:434.40px;top:391.50px;width:92.70px;height:12.50px;background-color:#fefefe;background-image:linear-gradient(90deg,#f4f4f4 0.75px,transparent 0.75px),linear-gradient(#f5f5f5 0.75px,transparent 0.75px);background-size:2.91px 2.91px;"></div>
<div class="r" style="left:527.90px;top:391.50px;width:92.70px;height:12.50px;background-color:#fefefe;background-image:linear-gradient(90deg,#f4f4f4 0.75px,transparent 0.75px),linear-gradient(#f5f5f5 0.75px,transparent 0.75px);background-size:2.91px 2.91px;"></div>
<div class="r" style="left:621.40px;top:391.50px;width:78.60px;height:12.50px;background-color:#fefefe;background-image:linear-gradient(90deg,#f4f4f4 0.75px,transparent 0.75px),linear-gradient(#f5f5f5 0.75px,transparent 0.75px);background-size:2.91px 2.91px;"></div>
<div class="t" style="right:626.20px;top:396.30px;font-size:5.2px;line-height:5.2px;color:#4a5660;font-weight:bold;text-align:right;">9</div>
<svg class="r" style="left:43.20px;top:393.90px;" width="2" height="8" viewBox="0 0 2 8"><circle cx="1" cy="1" r="0.85" fill="#36414a"/><circle cx="1" cy="3.45" r="0.85" fill="#36414a"/><circle cx="1" cy="5.9" r="0.85" fill="#36414a"/></svg>
<div class="t" style="left:50.30px;top:394.56px;font-size:7.25px;line-height:7.25px;color:#69737a;font-weight:normal;">20100</div>
<div class="t" style="left:118.50px;top:394.44px;font-size:7.4px;line-height:7.4px;color:#69737a;font-weight:normal;">Accounts Payable</div>
<div class="t" style="right:229.40px;top:394.52px;font-size:7.3px;line-height:7.3px;color:#69737a;font-weight:normal;text-align:right;">631,531.50</div>
<div class="t" style="right:135.60px;top:394.52px;font-size:7.3px;line-height:7.3px;color:#69737a;font-weight:normal;text-align:right;">7,744,800.93</div>
<div class="t" style="right:42.10px;top:394.52px;font-size:7.3px;line-height:7.3px;color:#69737a;font-weight:normal;text-align:right;">15,558,027.34</div>
<div class="r" style="left:15.00px;top:419.00px;width:23.20px;height:1.00px;background:#e3e7e9"></div>
<div class="r" style="left:47.80px;top:406.00px;width:67.30px;height:12.50px;background-color:#fefefe;background-image:linear-gradient(90deg,#f4f4f4 0.75px,transparent 0.75px),linear-gradient(#f5f5f5 0.75px,transparent 0.75px);background-size:2.91px 2.91px;"></div>
<div class="r" style="left:116.10px;top:406.00px;width:129.50px;height:12.50px;background-color:#fefefe;background-image:linear-gradient(90deg,#f4f4f4 0.75px,transparent 0.75px),linear-gradient(#f5f5f5 0.75px,transparent 0.75px);background-size:2.91px 2.91px;"></div>
<div class="r" style="left:246.50px;top:406.00px;width:93.10px;height:12.50px;background-color:#fefefe;background-image:linear-gradient(90deg,#f4f4f4 0.75px,transparent 0.75px),linear-gradient(#f5f5f5 0.75px,transparent 0.75px);background-size:2.91px 2.91px;"></div>
<div class="r" style="left:340.40px;top:406.00px;width:93.20px;height:12.50px;background-color:#fefefe;background-image:linear-gradient(90deg,#f4f4f4 0.75px,transparent 0.75px),linear-gradient(#f5f5f5 0.75px,transparent 0.75px);background-size:2.91px 2.91px;"></div>
<div class="r" style="left:434.40px;top:406.00px;width:92.70px;height:12.50px;background-color:#fefefe;background-image:linear-gradient(90deg,#f4f4f4 0.75px,transparent 0.75px),linear-gradient(#f5f5f5 0.75px,transparent 0.75px);background-size:2.91px 2.91px;"></div>
<div class="r" style="left:527.90px;top:406.00px;width:92.70px;height:12.50px;background-color:#fefefe;background-image:linear-gradient(90deg,#f4f4f4 0.75px,transparent 0.75px),linear-gradient(#f5f5f5 0.75px,transparent 0.75px);background-size:2.91px 2.91px;"></div>
<div class="r" style="left:621.40px;top:406.00px;width:78.60px;height:12.50px;background-color:#fefefe;background-image:linear-gradient(90deg,#f4f4f4 0.75px,transparent 0.75px),linear-gradient(#f5f5f5 0.75px,transparent 0.75px);background-size:2.91px 2.91px;"></div>
<div class="t" style="right:626.20px;top:410.80px;font-size:5.2px;line-height:5.2px;color:#4a5660;font-weight:bold;text-align:right;">10</div>
<svg class="r" style="left:43.20px;top:408.40px;" width="2" height="8" viewBox="0 0 2 8"><circle cx="1" cy="1" r="0.85" fill="#36414a"/><circle cx="1" cy="3.45" r="0.85" fill="#36414a"/><circle cx="1" cy="5.9" r="0.85" fill="#36414a"/></svg>
<div class="t" style="left:50.30px;top:409.06px;font-size:7.25px;line-height:7.25px;color:#69737a;font-weight:normal;">20200</div>
<div class="t" style="left:118.50px;top:408.94px;font-size:7.4px;line-height:7.4px;color:#69737a;font-weight:normal;">Received Not Invoiced Clearing</div>
<div class="t" style="right:229.40px;top:409.02px;font-size:7.3px;line-height:7.3px;color:#69737a;font-weight:normal;text-align:right;">2,619,000.00</div>
<div class="t" style="right:135.60px;top:409.02px;font-size:7.3px;line-height:7.3px;color:#69737a;font-weight:normal;text-align:right;">15,196,303.00</div>
<div class="t" style="right:42.10px;top:409.02px;font-size:7.3px;line-height:7.3px;color:#69737a;font-weight:normal;text-align:right;">13,000,790.17</div>
<div class="r" style="left:15.00px;top:433.50px;width:23.20px;height:1.00px;background:#e3e7e9"></div>
<div class="r" style="left:47.80px;top:420.50px;width:67.30px;height:12.50px;background-color:#fefefe;background-image:linear-gradient(90deg,#f4f4f4 0.75px,transparent 0.75px),linear-gradient(#f5f5f5 0.75px,transparent 0.75px);background-size:2.91px 2.91px;"></div>
<div class="r" style="left:116.10px;top:420.50px;width:129.50px;height:12.50px;background-color:#fefefe;background-image:linear-gradient(90deg,#f4f4f4 0.75px,transparent 0.75px),linear-gradient(#f5f5f5 0.75px,transparent 0.75px);background-size:2.91px 2.91px;"></div>
<div class="r" style="left:246.50px;top:420.50px;width:93.10px;height:12.50px;background-color:#fefefe;background-image:linear-gradient(90deg,#f4f4f4 0.75px,transparent 0.75px),linear-gradient(#f5f5f5 0.75px,transparent 0.75px);background-size:2.91px 2.91px;"></div>
<div class="r" style="left:340.40px;top:420.50px;width:93.20px;height:12.50px;background-color:#fefefe;background-image:linear-gradient(90deg,#f4f4f4 0.75px,transparent 0.75px),linear-gradient(#f5f5f5 0.75px,transparent 0.75px);background-size:2.91px 2.91px;"></div>
<div class="r" style="left:434.40px;top:420.50px;width:92.70px;height:12.50px;background-color:#fefefe;background-image:linear-gradient(90deg,#f4f4f4 0.75px,transparent 0.75px),linear-gradient(#f5f5f5 0.75px,transparent 0.75px);background-size:2.91px 2.91px;"></div>
<div class="r" style="left:527.90px;top:420.50px;width:92.70px;height:12.50px;background-color:#fefefe;background-image:linear-gradient(90deg,#f4f4f4 0.75px,transparent 0.75px),linear-gradient(#f5f5f5 0.75px,transparent 0.75px);background-size:2.91px 2.91px;"></div>
<div class="r" style="left:621.40px;top:420.50px;width:78.60px;height:12.50px;background-color:#fefefe;background-image:linear-gradient(90deg,#f4f4f4 0.75px,transparent 0.75px),linear-gradient(#f5f5f5 0.75px,transparent 0.75px);background-size:2.91px 2.91px;"></div>
<div class="t" style="right:626.20px;top:425.30px;font-size:5.2px;line-height:5.2px;color:#4a5660;font-weight:bold;text-align:right;">11</div>
<svg class="r" style="left:43.20px;top:422.90px;" width="2" height="8" viewBox="0 0 2 8"><circle cx="1" cy="1" r="0.85" fill="#36414a"/><circle cx="1" cy="3.45" r="0.85" fill="#36414a"/><circle cx="1" cy="5.9" r="0.85" fill="#36414a"/></svg>
<div class="t" style="left:50.30px;top:423.56px;font-size:7.25px;line-height:7.25px;color:#69737a;font-weight:normal;">20250</div>
<div class="t" style="left:118.50px;top:423.44px;font-size:7.4px;line-height:7.4px;color:#69737a;font-weight:normal;">Accrued additional/landed cost</div>
<div class="t" style="right:42.10px;top:423.52px;font-size:7.3px;line-height:7.3px;color:#69737a;font-weight:normal;text-align:right;">12,141.56</div>
<div class="r" style="left:15.00px;top:448.00px;width:23.20px;height:1.00px;background:#e3e7e9"></div>
<div class="r" style="left:47.80px;top:435.00px;width:67.30px;height:12.50px;background-color:#fefefe;background-image:linear-gradient(90deg,#f4f4f4 0.75px,transparent 0.75px),linear-gradient(#f5f5f5 0.75px,transparent 0.75px);background-size:2.91px 2.91px;"></div>
<div class="r" style="left:116.10px;top:435.00px;width:129.50px;height:12.50px;background-color:#fefefe;background-image:linear-gradient(90deg,#f4f4f4 0.75px,transparent 0.75px),linear-gradient(#f5f5f5 0.75px,transparent 0.75px);background-size:2.91px 2.91px;"></div>
<div class="r" style="left:246.50px;top:435.00px;width:93.10px;height:12.50px;background-color:#fefefe;background-image:linear-gradient(90deg,#f4f4f4 0.75px,transparent 0.75px),linear-gradient(#f5f5f5 0.75px,transparent 0.75px);background-size:2.91px 2.91px;"></div>
<div class="r" style="left:340.40px;top:435.00px;width:93.20px;height:12.50px;background-color:#fefefe;background-image:linear-gradient(90deg,#f4f4f4 0.75px,transparent 0.75px),linear-gradient(#f5f5f5 0.75px,transparent 0.75px);background-size:2.91px 2.91px;"></div>
<div class="r" style="left:434.40px;top:435.00px;width:92.70px;height:12.50px;background-color:#fefefe;background-image:linear-gradient(90deg,#f4f4f4 0.75px,transparent 0.75px),linear-gradient(#f5f5f5 0.75px,transparent 0.75px);background-size:2.91px 2.91px;"></div>
<div class="r" style="left:527.90px;top:435.00px;width:92.70px;height:12.50px;background-color:#fefefe;background-image:linear-gradient(90deg,#f4f4f4 0.75px,transparent 0.75px),linear-gradient(#f5f5f5 0.75px,transparent 0.75px);background-size:2.91px 2.91px;"></div>
<div class="r" style="left:621.40px;top:435.00px;width:78.60px;height:12.50px;background-color:#fefefe;background-image:linear-gradient(90deg,#f4f4f4 0.75px,transparent 0.75px),linear-gradient(#f5f5f5 0.75px,transparent 0.75px);background-size:2.91px 2.91px;"></div>
<div class="t" style="right:626.20px;top:439.80px;font-size:5.2px;line-height:5.2px;color:#4a5660;font-weight:bold;text-align:right;">12</div>
<svg class="r" style="left:43.20px;top:437.40px;" width="2" height="8" viewBox="0 0 2 8"><circle cx="1" cy="1" r="0.85" fill="#36414a"/><circle cx="1" cy="3.45" r="0.85" fill="#36414a"/><circle cx="1" cy="5.9" r="0.85" fill="#36414a"/></svg>
<div class="t" style="left:50.30px;top:438.06px;font-size:7.25px;line-height:7.25px;color:#69737a;font-weight:normal;">20600</div>
<div class="t" style="left:118.50px;top:437.94px;font-size:7.4px;line-height:7.4px;color:#69737a;font-weight:normal;">Inter-Company Payables</div>
<div class="t" style="right:42.10px;top:438.02px;font-size:7.3px;line-height:7.3px;color:#69737a;font-weight:normal;text-align:right;">1,200.00</div>
<div class="r" style="left:15.00px;top:462.50px;width:23.20px;height:1.00px;background:#e3e7e9"></div>
<div class="r" style="left:47.80px;top:449.50px;width:67.30px;height:12.50px;background-color:#fefefe;background-image:linear-gradient(90deg,#f4f4f4 0.75px,transparent 0.75px),linear-gradient(#f5f5f5 0.75px,transparent 0.75px);background-size:2.91px 2.91px;"></div>
<div class="r" style="left:116.10px;top:449.50px;width:129.50px;height:12.50px;background-color:#fefefe;background-image:linear-gradient(90deg,#f4f4f4 0.75px,transparent 0.75px),linear-gradient(#f5f5f5 0.75px,transparent 0.75px);background-size:2.91px 2.91px;"></div>
<div class="r" style="left:246.50px;top:449.50px;width:93.10px;height:12.50px;background-color:#fefefe;background-image:linear-gradient(90deg,#f4f4f4 0.75px,transparent 0.75px),linear-gradient(#f5f5f5 0.75px,transparent 0.75px);background-size:2.91px 2.91px;"></div>
<div class="r" style="left:340.40px;top:449.50px;width:93.20px;height:12.50px;background-color:#fefefe;background-image:linear-gradient(90deg,#f4f4f4 0.75px,transparent 0.75px),linear-gradient(#f5f5f5 0.75px,transparent 0.75px);background-size:2.91px 2.91px;"></div>
<div class="r" style="left:434.40px;top:449.50px;width:92.70px;height:12.50px;background-color:#fefefe;background-image:linear-gradient(90deg,#f4f4f4 0.75px,transparent 0.75px),linear-gradient(#f5f5f5 0.75px,transparent 0.75px);background-size:2.91px 2.91px;"></div>
<div class="r" style="left:527.90px;top:449.50px;width:92.70px;height:12.50px;background-color:#fefefe;background-image:linear-gradient(90deg,#f4f4f4 0.75px,transparent 0.75px),linear-gradient(#f5f5f5 0.75px,transparent 0.75px);background-size:2.91px 2.91px;"></div>
<div class="r" style="left:621.40px;top:449.50px;width:78.60px;height:12.50px;background-color:#fefefe;background-image:linear-gradient(90deg,#f4f4f4 0.75px,transparent 0.75px),linear-gradient(#f5f5f5 0.75px,transparent 0.75px);background-size:2.91px 2.91px;"></div>
<div class="t" style="right:626.20px;top:454.30px;font-size:5.2px;line-height:5.2px;color:#4a5660;font-weight:bold;text-align:right;">13</div>
<svg class="r" style="left:43.20px;top:451.90px;" width="2" height="8" viewBox="0 0 2 8"><circle cx="1" cy="1" r="0.85" fill="#36414a"/><circle cx="1" cy="3.45" r="0.85" fill="#36414a"/><circle cx="1" cy="5.9" r="0.85" fill="#36414a"/></svg>
<div class="t" style="left:50.30px;top:452.56px;font-size:7.25px;line-height:7.25px;color:#69737a;font-weight:normal;">20650</div>
<div class="t" style="left:118.50px;top:452.44px;font-size:7.4px;line-height:7.4px;color:#69737a;font-weight:normal;">Inter-Company Due To</div>
<div class="t" style="right:229.40px;top:452.52px;font-size:7.3px;line-height:7.3px;color:#69737a;font-weight:normal;text-align:right;">3,300.00</div>
<div class="r" style="left:15.00px;top:477.00px;width:23.20px;height:1.00px;background:#e3e7e9"></div>
<div class="r" style="left:47.80px;top:464.00px;width:67.30px;height:12.50px;background-color:#fefefe;background-image:linear-gradient(90deg,#f4f4f4 0.75px,transparent 0.75px),linear-gradient(#f5f5f5 0.75px,transparent 0.75px);background-size:2.91px 2.91px;"></div>
<div class="r" style="left:116.10px;top:464.00px;width:129.50px;height:12.50px;background-color:#fefefe;background-image:linear-gradient(90deg,#f4f4f4 0.75px,transparent 0.75px),linear-gradient(#f5f5f5 0.75px,transparent 0.75px);background-size:2.91px 2.91px;"></div>
<div class="r" style="left:246.50px;top:464.00px;width:93.10px;height:12.50px;background-color:#fefefe;background-image:linear-gradient(90deg,#f4f4f4 0.75px,transparent 0.75px),linear-gradient(#f5f5f5 0.75px,transparent 0.75px);background-size:2.91px 2.91px;"></div>
<div class="r" style="left:340.40px;top:464.00px;width:93.20px;height:12.50px;background-color:#fefefe;background-image:linear-gradient(90deg,#f4f4f4 0.75px,transparent 0.75px),linear-gradient(#f5f5f5 0.75px,transparent 0.75px);background-size:2.91px 2.91px;"></div>
<div class="r" style="left:434.40px;top:464.00px;width:92.70px;height:12.50px;background-color:#fefefe;background-image:linear-gradient(90deg,#f4f4f4 0.75px,transparent 0.75px),linear-gradient(#f5f5f5 0.75px,transparent 0.75px);background-size:2.91px 2.91px;"></div>
<div class="r" style="left:527.90px;top:464.00px;width:92.70px;height:12.50px;background-color:#fefefe;background-image:linear-gradient(90deg,#f4f4f4 0.75px,transparent 0.75px),linear-gradient(#f5f5f5 0.75px,transparent 0.75px);background-size:2.91px 2.91px;"></div>
<div class="r" style="left:621.40px;top:464.00px;width:78.60px;height:12.50px;background-color:#fefefe;background-image:linear-gradient(90deg,#f4f4f4 0.75px,transparent 0.75px),linear-gradient(#f5f5f5 0.75px,transparent 0.75px);background-size:2.91px 2.91px;"></div>
<div class="t" style="right:626.20px;top:468.80px;font-size:5.2px;line-height:5.2px;color:#4a5660;font-weight:bold;text-align:right;">14</div>
<svg class="r" style="left:43.20px;top:466.40px;" width="2" height="8" viewBox="0 0 2 8"><circle cx="1" cy="1" r="0.85" fill="#36414a"/><circle cx="1" cy="3.45" r="0.85" fill="#36414a"/><circle cx="1" cy="5.9" r="0.85" fill="#36414a"/></svg>
<div class="t" style="left:50.30px;top:467.06px;font-size:7.25px;line-height:7.25px;color:#69737a;font-weight:normal;">22100</div>
<div class="t" style="left:118.50px;top:466.94px;font-size:7.4px;line-height:7.4px;color:#69737a;font-weight:normal;">Inter-Site Clearing</div>
<div class="t" style="right:323.40px;top:467.02px;font-size:7.3px;line-height:7.3px;color:#69737a;font-weight:normal;text-align:right;">75,947.00</div>
<div class="r" style="left:15.00px;top:491.50px;width:23.20px;height:1.00px;background:#e3e7e9"></div>
<div class="r" style="left:47.80px;top:478.50px;width:67.30px;height:12.50px;background-color:#fefefe;background-image:linear-gradient(90deg,#f4f4f4 0.75px,transparent 0.75px),linear-gradient(#f5f5f5 0.75px,transparent 0.75px);background-size:2.91px 2.91px;"></div>
<div class="r" style="left:116.10px;top:478.50px;width:129.50px;height:12.50px;background-color:#fefefe;background-image:linear-gradient(90deg,#f4f4f4 0.75px,transparent 0.75px),linear-gradient(#f5f5f5 0.75px,transparent 0.75px);background-size:2.91px 2.91px;"></div>
<div class="r" style="left:246.50px;top:478.50px;width:93.10px;height:12.50px;background-color:#fefefe;background-image:linear-gradient(90deg,#f4f4f4 0.75px,transparent 0.75px),linear-gradient(#f5f5f5 0.75px,transparent 0.75px);background-size:2.91px 2.91px;"></div>
<div class="r" style="left:340.40px;top:478.50px;width:93.20px;height:12.50px;background-color:#fefefe;background-image:linear-gradient(90deg,#f4f4f4 0.75px,transparent 0.75px),linear-gradient(#f5f5f5 0.75px,transparent 0.75px);background-size:2.91px 2.91px;"></div>
<div class="r" style="left:434.40px;top:478.50px;width:92.70px;height:12.50px;background-color:#fefefe;background-image:linear-gradient(90deg,#f4f4f4 0.75px,transparent 0.75px),linear-gradient(#f5f5f5 0.75px,transparent 0.75px);background-size:2.91px 2.91px;"></div>
<div class="r" style="left:527.90px;top:478.50px;width:92.70px;height:12.50px;background-color:#fefefe;background-image:linear-gradient(90deg,#f4f4f4 0.75px,transparent 0.75px),linear-gradient(#f5f5f5 0.75px,transparent 0.75px);background-size:2.91px 2.91px;"></div>
<div class="r" style="left:621.40px;top:478.50px;width:78.60px;height:12.50px;background-color:#fefefe;background-image:linear-gradient(90deg,#f4f4f4 0.75px,transparent 0.75px),linear-gradient(#f5f5f5 0.75px,transparent 0.75px);background-size:2.91px 2.91px;"></div>
<div class="t" style="right:626.20px;top:483.30px;font-size:5.2px;line-height:5.2px;color:#4a5660;font-weight:bold;text-align:right;">15</div>
<svg class="r" style="left:43.20px;top:480.90px;" width="2" height="8" viewBox="0 0 2 8"><circle cx="1" cy="1" r="0.85" fill="#36414a"/><circle cx="1" cy="3.45" r="0.85" fill="#36414a"/><circle cx="1" cy="5.9" r="0.85" fill="#36414a"/></svg>
<div class="t" style="left:50.30px;top:481.56px;font-size:7.25px;line-height:7.25px;color:#69737a;font-weight:normal;">24100</div>
<div class="t" style="left:118.50px;top:481.44px;font-size:7.4px;line-height:7.4px;color:#69737a;font-weight:normal;">Accrued Salaries</div>
<div class="t" style="right:229.40px;top:481.52px;font-size:7.3px;line-height:7.3px;color:#69737a;font-weight:normal;text-align:right;">418,500.00</div>
<div class="t" style="right:42.10px;top:481.52px;font-size:7.3px;line-height:7.3px;color:#69737a;font-weight:normal;text-align:right;">1,318,500.00</div>
<div class="r" style="left:38.20px;top:273.60px;width:0.60px;height:209.40px;background:#eceff1"></div>
<div class="r" style="left:245.10px;top:273.60px;width:1.40px;height:209.40px;background:#dcdedf"></div>
<div class="r" style="left:14.60px;top:240.50px;width:66.80px;height:50.70px;background:#fff;box-shadow:0 1px 3px rgba(0,0,0,0.25)"></div>
<div class="r" style="left:15.80px;top:241.60px;width:64.40px;height:14.80px;background:linear-gradient(#fcfcfd,#f3f5f6)"></div>
<svg class="r" style="left:19.70px;top:246.60px;" width="2" height="8" viewBox="0 0 2 8"><circle cx="1" cy="1" r="0.8" fill="#2f9a78"/><circle cx="1" cy="3.6" r="0.8" fill="#2f9a78"/><circle cx="1" cy="6.2" r="0.8" fill="#2f9a78"/></svg>
<svg class="r" style="left:24.30px;top:252.20px;" width="2" height="2" viewBox="0 0 2 2"><circle cx="1" cy="1" r="0.5" fill="#c0c6ca"/></svg>
<svg class="r" style="left:34.20px;top:247.70px;" width="8" height="8" viewBox="0 0 8 8"><circle cx="3.2" cy="3.2" r="2.45" fill="none" stroke="#2c3a58" stroke-width="0.95"/><path d="M5 5 L6.8 6.8" stroke="#2c3a58" stroke-width="1.2" stroke-linecap="round"/></svg>
<svg class="r" style="left:19.00px;top:263.60px;" width="8" height="9" viewBox="0 0 8 9"><rect x="0.4" y="0.6" width="7.2" height="7.4" fill="#d9ecd6" stroke="#6fae6a" stroke-width="0.6"/><path d="M0.4 2.6 H7.6 M0.4 4.4 H7.6 M0.4 6.2 H7.6 M3 0.6 V8 M5.3 0.6 V8" stroke="#8cc088" stroke-width="0.5"/><path d="M1.2 1.8 L3.6 6.8 M3.6 1.8 L1.2 6.8" stroke="#2e8a30" stroke-width="0.9"/></svg>
<div class="t" style="left:29.00px;top:264.25px;font-size:6.68px;line-height:6.68px;color:#24313b;font-weight:bold;">Excel export</div>
<svg class="r" style="left:19.00px;top:276.40px;" width="8" height="9" viewBox="0 0 8 9"><rect x="0.5" y="0.5" width="7" height="8" fill="#eef1ee" stroke="#a9b1aa" stroke-width="0.6"/><path d="M1.8 4.5 H6.2 M4.4 3 L6.2 4.5 L4.4 6" stroke="#6fae6c" stroke-width="0.8" fill="none"/></svg>
<div class="t" style="left:29.00px;top:276.65px;font-size:6.68px;line-height:6.68px;color:#24313b;font-weight:bold;">CSV export</div>
<div class="r" style="left:13.80px;top:239.60px;width:69.10px;height:38.50px;border:2px solid #e41e2c;box-sizing:border-box"></div>
</body></html>
